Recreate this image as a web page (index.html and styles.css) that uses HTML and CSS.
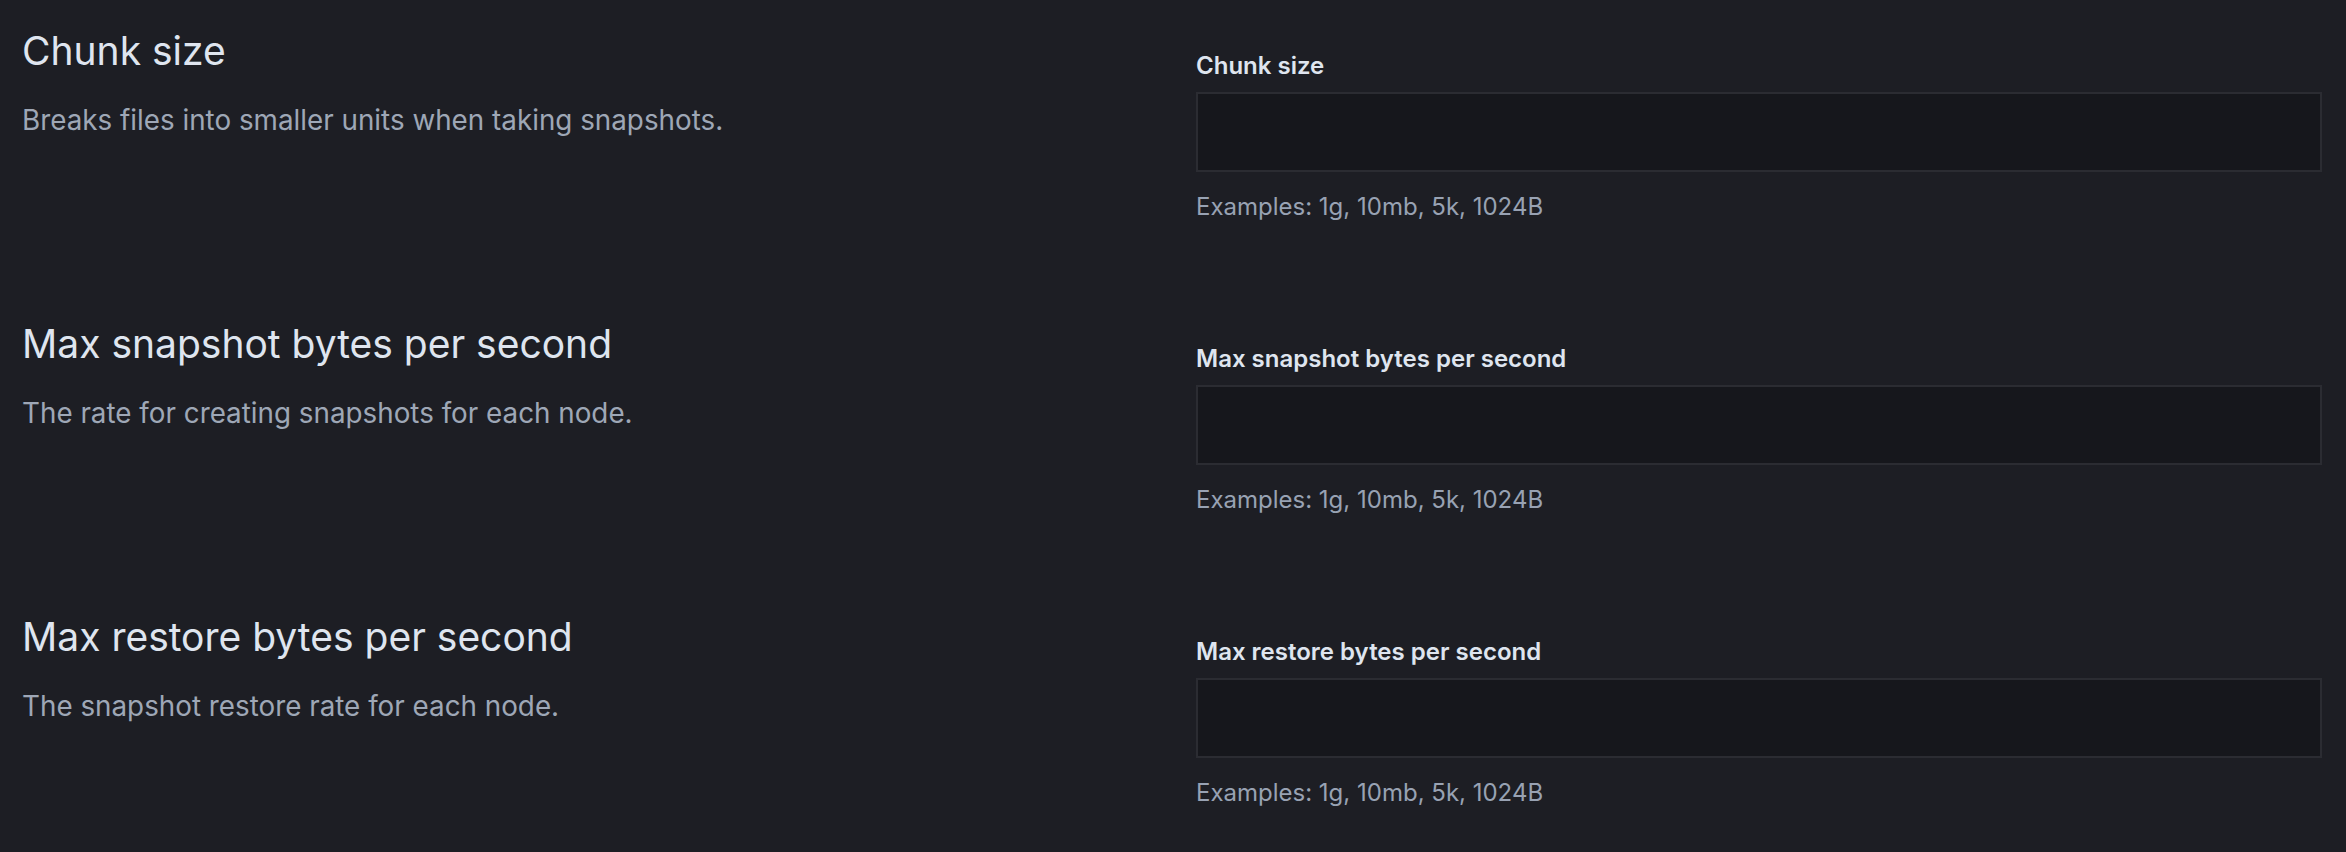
FILE: index.html
```html
<!DOCTYPE html>
<html lang="en">

<head>
    <meta charset="UTF-8">
    <meta name="viewport" content="width=device-width, initial-scale=1.0">
    <title>Snapshot settings</title>
    <link rel="stylesheet" href="styles.css">
</head>

<body>
    <main class="settings">
        <div class="group">
            <div class="group-text">
                <h3 class="group-title">Chunk size</h3>
                <p class="group-desc">Breaks files into smaller units when taking snapshots.</p>
            </div>
            <div class="group-fields">
                <label class="field-label" for="chunk">Chunk size</label>
                <input class="field-input" type="text" id="chunk">
                <div class="field-help">Examples: 1g, 10mb, 5k, 1024B</div>
            </div>
        </div>
        <div class="group">
            <div class="group-text">
                <h3 class="group-title">Max snapshot bytes per second</h3>
                <p class="group-desc">The rate for creating snapshots for each node.</p>
            </div>
            <div class="group-fields">
                <label class="field-label" for="snap">Max snapshot bytes per second</label>
                <input class="field-input" type="text" id="snap">
                <div class="field-help">Examples: 1g, 10mb, 5k, 1024B</div>
            </div>
        </div>
        <div class="group">
            <div class="group-text">
                <h3 class="group-title">Max restore bytes per second</h3>
                <p class="group-desc">The snapshot restore rate for each node.</p>
            </div>
            <div class="group-fields">
                <label class="field-label" for="restore">Max restore bytes per second</label>
                <input class="field-input" type="text" id="restore">
                <div class="field-help">Examples: 1g, 10mb, 5k, 1024B</div>
            </div>
        </div>
    </main>
</body>

</html>
```

FILE: styles.css
```css
* {
    margin: 0;
    padding: 0;
    box-sizing: border-box;
}

body {
    background-color: #1d1e24;
    font-family: Inter, "Noto Sans", sans-serif;
    color: #dfe5ef;
    min-height: 100vh;
}

.settings {
    padding: 0 24px 0 22px;
}

.group {
    display: flex;
    gap: 48px;
    margin-bottom: 70px;
}

.group-text {
    flex: 1 1 0;
    padding-top: 27px;
}

.group-title {
    font-size: 39px;
    line-height: 48px;
    font-weight: 400;
    color: #dfe5ef;
}

.group-desc {
    margin-top: 25px;
    font-size: 27.8px;
    line-height: 40px;
    color: #9ea7b6;
}

.group-fields {
    flex: 0 0 1126px;
    padding-top: 50px;
    display: flex;
    flex-direction: column;
}

.field-label {
    font-size: 24px;
    line-height: 32px;
    font-weight: 600;
    color: #dfe5ef;
    margin-bottom: 10px;
}

.field-input {
    height: 80px;
    width: 100%;
    background-color: #16171c;
    border: 2px solid #2b2c32;
    outline: none;
    color: #dfe5ef;
    font-family: inherit;
    font-size: 28px;
    padding: 0 24px;
}

.field-help {
    margin-top: 19px;
    font-size: 24px;
    line-height: 32px;
    color: #98a2b3;
}
```
